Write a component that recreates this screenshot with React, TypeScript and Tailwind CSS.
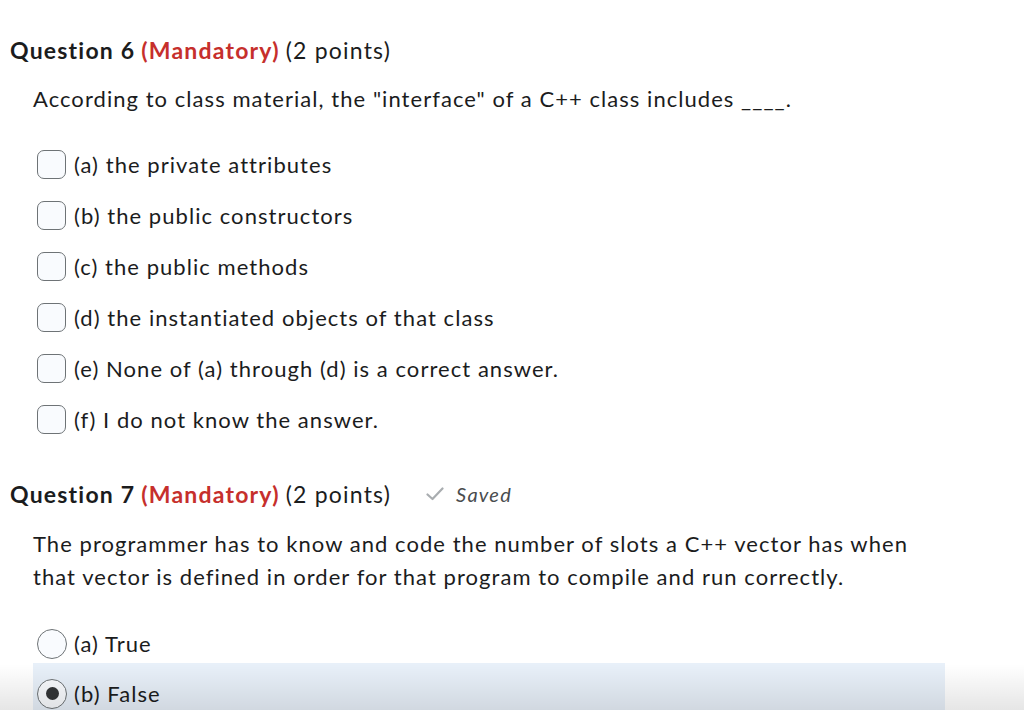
import { useState } from "react";

const q6Options = [
  "(a) the private attributes",
  "(b) the public constructors",
  "(c) the public methods",
  "(d) the instantiated objects of that class",
  "(e) None of (a) through (d) is a correct answer.",
  "(f) I do not know the answer.",
];

const q7Options = ["(a) True", "(b) False"];

function Heading({ num, saved }: { num: number; saved?: boolean }) {
  return (
    <h2 className="flex items-center h-[30px] text-[23px] leading-[30px] tracking-[1.2px] text-[#1b1c1d]">
      <span className="font-bold">Question {num}</span>
      <span className="font-bold text-[#c62f2c] ml-[6px]">(Mandatory)</span>
      <span className="ml-[6px]">(2 points)</span>
      {saved && (
        <span className="flex items-center ml-[35px] text-[20px] italic tracking-[1.2px] text-[#494c4e]">
          <svg width="18" height="14" viewBox="0 0 18 14" className="mr-[12px]">
            <path d="M1.5 7.5 L6.5 12 L16.5 1.5" fill="none" stroke="#a9adb0" strokeWidth="2.2" strokeLinecap="round" strokeLinejoin="round" />
          </svg>
          Saved
        </span>
      )}
    </h2>
  );
}

export default function App() {
  const [checked, setChecked] = useState<number[]>([]);
  const [answer, setAnswer] = useState(1);

  function toggle(i: number) {
    setChecked((c) => (c.includes(i) ? c.filter((x) => x !== i) : [...c, i]));
  }

  return (
    <div
      className="relative h-[710px] overflow-hidden bg-white text-[#1b1c1d]"
      style={{ fontFamily: "Lato, 'Noto Sans', sans-serif", fontVariantLigatures: "none" }}
    >
      <div className="px-[10px] pt-[35px]">
        <Heading num={6} />
        <p className="ml-[23px] mt-[17px] text-[22px] leading-[33px] tracking-[1.05px]">
          According to class material, the "interface" of a C++ class includes ____.
        </p>
        <div className="ml-[23px] mt-[24px] flex flex-col">
          {q6Options.map((o, i) => (
            <label key={o} className="flex items-center h-[51px] cursor-pointer" onClick={() => toggle(i)}>
              <span className="ml-[4px] w-[29px] h-[29px] rounded-[7px] border-[1.5px] border-[#6e7376] bg-[#f9fbfe] flex items-center justify-center">
                {checked.includes(i) && <span className="w-[13px] h-[13px] bg-[#202122] rounded-[2px]" />}
              </span>
              <span className="ml-[8px] text-[22px] tracking-[1.05px]">{o}</span>
            </label>
          ))}
        </div>

        <div className="mt-[34px]">
          <Heading num={7} saved />
        </div>
        <p className="ml-[23px] mt-[18px] w-[912px] text-[22px] leading-[33px] tracking-[1.05px]">
          The programmer has to know and code the number of slots a C++ vector has when that vector is defined in order for
          that program to compile and run correctly.
        </p>
        <div className="ml-[23px] mt-[26px] w-[912px] flex flex-col">
          {q7Options.map((o, i) => (
            <label
              key={o}
              onClick={() => setAnswer(i)}
              className={`flex cursor-pointer ${i === 1 ? "h-[62px] items-center bg-[#e8f0f9]" : "h-[44px] pt-[10px] items-start"}`}
            >
              <span className={`ml-[4px] w-[30px] h-[30px] rounded-full border-[1.5px] border-[#6e7376] bg-[#f9fbfe] flex items-center justify-center ${i === 1 ? "-mt-[1px]" : ""}`}>
                {answer === i && <span className="w-[13px] h-[13px] rounded-full bg-[#333537]" />}
              </span>
              <span className={`ml-[7px] text-[22px] tracking-[1.05px] ${i === 0 ? "leading-[30px]" : "-mt-[1px]"}`}>{o}</span>
            </label>
          ))}
        </div>
      </div>
      <div className="pointer-events-none absolute bottom-0 left-0 right-0 h-[46px] bg-gradient-to-b from-transparent to-black/10" />
    </div>
  );
}
